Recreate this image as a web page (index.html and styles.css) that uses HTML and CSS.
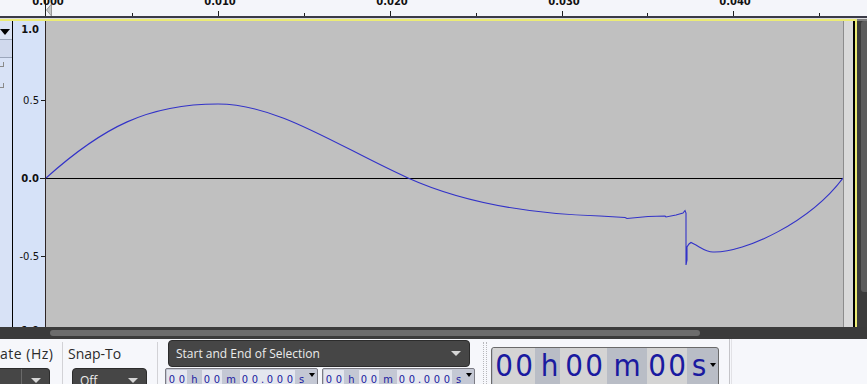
FILE: index.html
```html
<!DOCTYPE html>
<html lang="en">
    <head>
        <meta charset="UTF-8">
        <title>Audacity - track view</title>
        <link rel="stylesheet" href="styles.css">
    </head>
    <body>
    <div class="window">
        <svg class="time-ruler" width="867" height="16" viewBox="0 0 867 16">
            <g class="ticks">
                <line x1="45.5" y1="0" x2="45.5" y2="16"/>
                <line x1="218.5" y1="11" x2="218.5" y2="16"/>
                <line x1="390.5" y1="11" x2="390.5" y2="16"/>
                <line x1="562.5" y1="11" x2="562.5" y2="16"/>
                <line x1="733.5" y1="11" x2="733.5" y2="16"/>
                <line x1="132.5" y1="13" x2="132.5" y2="16"/>
                <line x1="304.5" y1="13" x2="304.5" y2="16"/>
                <line x1="476.5" y1="13" x2="476.5" y2="16"/>
                <line x1="647.5" y1="13" x2="647.5" y2="16"/>
                <line x1="819.5" y1="13" x2="819.5" y2="16"/>
            </g>
            <polygon class="play-marker" points="46.5,10 51.5,4 51.5,16"/>
            <g class="ruler-labels">
                <text x="48" y="5">0.000</text>
                <text x="220" y="5">0.010</text>
                <text x="392" y="5">0.020</text>
                <text x="564" y="5">0.030</text>
                <text x="735" y="5">0.040</text>
            </g>
        </svg>
        <div class="ruler-edge"></div>
        <div class="track-area">
            <div class="track-frame">
                <div class="track-ctrl">
                    <div class="ctrl-menu"><span class="menu-arrow"></span></div>
                    <div class="ctrl-box"></div>
                    <div class="ctrl-mark"></div>
                    <div class="ctrl-mark"></div>
                </div>
                <svg class="vruler" width="33" height="306" viewBox="13 21 33 306">
                    <rect x="13" y="21" width="33" height="306" class="vruler-bg"/>
                    <line x1="45.5" y1="21" x2="45.5" y2="327" class="vruler-edge"/>
                    <g class="ticks">
                        <line x1="41" y1="100.5" x2="45" y2="100.5"/>
                        <line x1="40" y1="178.5" x2="45" y2="178.5"/>
                        <line x1="41" y1="256.5" x2="45" y2="256.5"/>
                    </g>
                    <g class="amp-labels">
                        <text x="39" y="33" class="strong">1.0</text>
                        <text x="39" y="104">0.5</text>
                        <text x="39" y="182" class="strong">0.0</text>
                        <text x="39" y="260">-0.5</text>
                        <text x="39" y="334" class="strong">-1.0</text>
                    </g>
                </svg>
                <svg class="wave" width="797" height="306" viewBox="46 21 797 306">
                    <rect x="46" y="21" width="797" height="306" class="wave-bg"/>
                    <line x1="46" y1="178.5" x2="843" y2="178.5" class="zero-line"/>
                    <path class="wave-line" d="M46,178 C103,127 148,104 218,104 C278,104 338,146.5 408,178 C458,200.5 520,213.6 600,216 L625,217.5 L627,218.5 L648,216.5 L665,216 L666,217 L676,215 L683,213 L685,210.5 L686,213 L686,265 L687,260 L687,247 L689,244 L691,242.5 L694,244 C700,247 706,252 713,252 C745,253 810,222 843,178"/>
                </svg>
                <div class="wave-edge"></div>
            </div>
            <div class="vscroll"><div class="vthumb"></div></div>
        </div>
        <div class="hscroll"><div class="hthumb"></div></div>
        <div class="toolbar">
            <div class="tb-group rate">
                <div class="tb-label">ate (Hz)</div>
                <div class="combo"><span class="combo-field"></span><span class="combo-btn"><span class="arrow"></span></span></div>
            </div>
            <div class="tb-sep"></div>
            <div class="tb-group snap">
                <div class="tb-label">Snap-To</div>
                <div class="choice snap-choice">Off<span class="arrow"></span></div>
            </div>
            <div class="tb-sep"></div>
            <div class="tb-group selection">
                <div class="choice sel-choice">Start and End of Selection<span class="arrow"></span></div>
                <div class="sel-times">
                    <div class="time-small">
                        <span class="d">0</span><span class="d">0</span><span class="u uh">h</span><span class="d">0</span><span class="d">0</span><span class="u um">m</span><span class="d">0</span><span class="d">0</span><span class="dot">.</span><span class="d">0</span><span class="d">0</span><span class="d">0</span><span class="u us">s</span><span class="t-arrow"></span>
                    </div>
                    <div class="time-small">
                        <span class="d">0</span><span class="d">0</span><span class="u uh">h</span><span class="d">0</span><span class="d">0</span><span class="u um">m</span><span class="d">0</span><span class="d">0</span><span class="dot">.</span><span class="d">0</span><span class="d">0</span><span class="d">0</span><span class="u us">s</span><span class="t-arrow"></span>
                    </div>
                </div>
            </div>
            <div class="grip"></div>
            <div class="time-big">
                <span class="pair p1"><span class="d">0</span><span class="d">0</span></span><span class="u uh">h</span><span class="pair p2"><span class="d">0</span><span class="d">0</span></span><span class="u um">m</span><span class="pair p3"><span class="d">0</span><span class="d">0</span></span><span class="u us">s</span><span class="t-arrow"></span>
            </div>
            <div class="tb-sep double"></div>
        </div>
    </div>
    </body>
</html>
```

FILE: styles.css
```css
* {
    box-sizing: border-box;
}
body {
    margin: 0;
    background: #f6f7fb;
    font-family: "Open Sans", "DejaVu Sans", sans-serif;
}
.window {
    width: 867px;
    height: 384px;
    overflow: hidden;
    display: flex;
    flex-direction: column;
}
svg {
    display: block;
    flex: none;
}
.ticks line {
    stroke: #1e1e1e;
    stroke-width: 1;
}

/* time ruler */
.time-ruler {
    background: #f4f5fa;
}
.ruler-labels text,
.amp-labels text {
    font-family: "DejaVu Sans", sans-serif;
    font-size: 10px;
    fill: #111;
}
.ruler-labels text {
    font-weight: bold;
    text-anchor: middle;
}
.amp-labels text {
    text-anchor: end;
}
.amp-labels .strong {
    font-weight: bold;
}
.play-marker {
    fill: #c6c6c6;
    stroke: #9a9a9a;
    stroke-width: 1;
}
.ruler-edge {
    flex: none;
    height: 3px;
    border-top: 2px solid #3a3a46;
    background: #dcdce0;
}

/* track */
.track-area {
    flex: none;
    display: flex;
    height: 308px;
}
.track-frame {
    display: flex;
    width: 857px;
    border-top: 2px solid #ecec74;
    border-right: 2px solid #ecec74;
}
.track-ctrl {
    width: 13px;
    flex: none;
    border-right: 1px solid #000;
    background: #d8e2f6;
}
.ctrl-menu {
    height: 19px;
    padding: 8px 0 0 0;
    background: #dbe3f4;
    border-bottom: 1px solid #9ba6bb;
}
.menu-arrow {
    display: block;
    width: 0;
    border-left: 5px solid transparent;
    border-right: 5px solid transparent;
    border-top: 6px solid #000;
}
.ctrl-box {
    height: 18px;
    background: #d0d9ed;
    border-bottom: 1px solid #9ba6bb;
}
.ctrl-mark {
    width: 4px;
    height: 5px;
    margin-top: 4px;
    border-right: 1px solid #8a8a8a;
    border-bottom: 1px solid #8a8a8a;
}
.ctrl-mark + .ctrl-mark {
    margin-top: 16px;
}
.vruler-bg {
    fill: #d6e2f8;
}
.vruler-edge {
    stroke: #2e2424;
}
.wave-bg {
    fill: #c0c0c0;
}
.zero-line {
    stroke: #000;
    stroke-width: 1;
}
.wave-line {
    fill: none;
    stroke: #3232c8;
    stroke-width: 1.1;
}
.wave-edge {
    width: 12px;
    flex: none;
    background: #d9d9d9;
    border-left: 1px solid #8c8c8c;
    border-right: 2px solid #000;
}
.vscroll {
    width: 10px;
    flex: none;
    background: #3c3c3c;
    border-top: 2px solid #7e7e7e;
}
.vthumb {
    width: 6px;
    height: 271px;
    margin-left: 4px;
    background: #5c5c5c;
    border-radius: 3px 0 0 3px;
}
.hscroll {
    flex: none;
    height: 12px;
    padding-top: 3px;
    background: #3b3b3b;
}
.hthumb {
    width: 650px;
    height: 6px;
    margin-left: 50px;
    background: #6c6c6c;
    border-radius: 3px;
}

/* toolbar */
.toolbar {
    flex: none;
    display: flex;
    height: 45px;
    background: #f6f7fb;
}
.tb-group {
    display: flex;
    flex-direction: column;
    flex: none;
}
.tb-group > * {
    flex: none;
}
.tb-label {
    height: 29px;
    padding-top: 3px;
    line-height: 24px;
    font-size: 14px;
    color: #2b2b2b;
    white-space: nowrap;
}
.rate .tb-label {
    letter-spacing: 0.5px;
}
.tb-sep {
    flex: none;
    width: 1px;
    margin-top: 3px;
    background: #d2d2d6;
}
.tb-sep.double {
    width: 3px;
    margin: 0 0 0 10px;
    background: none;
    border-left: 1px solid #c4c4c8;
    border-right: 1px solid #e2e2e6;
}
.rate {
    width: 62px;
}
.snap {
    width: 94px;
}
.snap .tb-label {
    padding-left: 5px;
}
.selection {
    width: 325px;
    padding-left: 10px;
}
.arrow {
    width: 0;
    border-left: 5px solid transparent;
    border-right: 5px solid transparent;
    border-top: 5px solid #d6d6d6;
}
.combo {
    display: flex;
    width: 50px;
    height: 24px;
    background: #464646;
    border: 1px solid #2c2c2c;
    border-left: none;
    border-radius: 0 4px 4px 0;
}
.combo-field {
    width: 22px;
    border-right: 1px solid #6a6a6a;
}
.combo-btn {
    flex: 1;
    display: flex;
    justify-content: center;
    padding-top: 9px;
}
.choice {
    display: flex;
    align-items: center;
    justify-content: space-between;
    background: #464646;
    border: 1px solid #2c2c2c;
    border-radius: 4px;
    color: #ececec;
    font-size: 12px;
    padding: 0 8px 0 7px;
    white-space: nowrap;
}
.snap-choice {
    width: 75px;
    height: 24px;
    margin-left: 9px;
}
.sel-choice {
    width: 302px;
    height: 27px;
    margin-top: 1px;
}
.sel-times {
    display: flex;
    gap: 4px;
    margin: 1px 0 0 -3px;
}

/* time text controls */
.time-small,
.time-big {
    display: flex;
    flex: none;
    color: #1a1aa0;
    font-family: "DejaVu Sans Condensed", "DejaVu Sans", sans-serif;
    white-space: nowrap;
}
.time-small span,
.time-big span {
    flex: none;
    text-align: center;
}
.time-small {
    width: 153px;
    height: 22px;
    padding: 1px 0 0 1px;
    border: 1px solid #7c7c84;
    border-radius: 2px;
    background: #c4c8d4;
    font-size: 11px;
    line-height: 19px;
}
.time-small .d {
    width: 10px;
    background: #e4e6ee;
}
.time-small .dot {
    width: 5px;
    background: #e4e6ee;
}
.time-small .uh {
    width: 15px;
}
.time-small .um {
    width: 18px;
}
.time-small .us {
    width: 13px;
}
.t-arrow {
    width: 0;
    height: 0;
    margin: 3px 0 0 1px;
    border-left: 3px solid transparent;
    border-right: 3px solid transparent;
    border-top: 4px solid #000;
}
.grip {
    flex: none;
    width: 4px;
    margin: 3px 4px 0 0;
    border-left: 1px dotted #b8b8bc;
    border-right: 1px dotted #b8b8bc;
}
.time-big {
    width: 228px;
    height: 40px;
    margin-top: 8px;
    padding-left: 1px;
    border: 1px solid #6a6a6a;
    border-radius: 3px;
    font-size: 31px;
    line-height: 34px;
    background: #b9bdc6;
}
.time-big .pair {
    display: flex;
    background: #d4d4d4;
}
.time-big .d {
    width: 20px;
}
.time-big .p1 {
    width: 42px;
    padding-left: 1px;
}
.time-big .p2 {
    width: 47px;
    padding-left: 4px;
}
.time-big .p3 {
    width: 40px;
}
.time-big .uh {
    width: 25px;
    padding-left: 4px;
}
.time-big .um {
    width: 40px;
}
.time-big .us {
    width: 22px;
    padding-left: 2px;
}
.time-big .t-arrow {
    margin: 15px 0 0 1px;
}
```
